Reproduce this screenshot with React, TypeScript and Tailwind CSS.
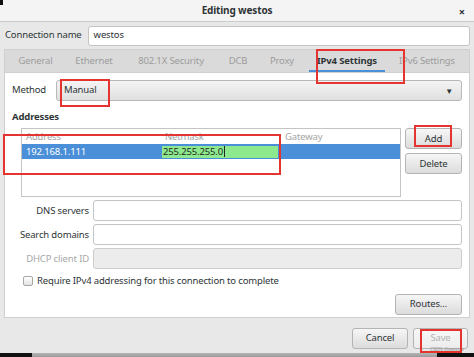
import React from "react"

const tabs = [
  { label: "General", width: "w-[57px]" },
  { label: "Ethernet", width: "w-[60px]" },
  { label: "802.1X Security", width: "w-[94px]" },
  { label: "DCB", width: "w-[40px]" },
  { label: "Proxy", width: "w-[48px]" },
  { label: "IPv4 Settings", width: "w-[82px]", active: true },
  { label: "IPv6 Settings", width: "w-[78px]" },
]

function Button({ children, className = "", disabled = false }: { children: React.ReactNode; className?: string; disabled?: boolean }) {
  return (
    <div
      className={`flex items-center justify-center rounded-[3px] border border-[#b4b4b4] bg-gradient-to-b ${
        disabled ? "from-[#f8f8f8] to-[#ececec] text-[#b2b2b2]" : "from-[#f6f6f6] to-[#dcdcdc] text-[#2e3436]"
      } ${className}`}
    >
      {children}
    </div>
  )
}

function Entry({ disabled = false }: { disabled?: boolean }) {
  return (
    <div
      className={`h-[21px] flex-1 rounded-[3px] border ${
        disabled ? "border-[#cdcdcd] bg-[#ececec]" : "border-[#c4c4c4] bg-white"
      }`}
    />
  )
}

export default function App() {
  return (
    <div
      className="relative flex h-[357px] w-[474px] flex-col overflow-hidden bg-[#e8e8e8] text-[9.5px] tracking-[-0.15px] text-[#2e3436]"
      style={{ fontFamily: '"Noto Sans", "Open Sans", sans-serif' }}
    >
      {/* Title bar */}
      <div className="relative flex h-[22px] shrink-0 items-center justify-center border-b border-[#cbcbcb] bg-[#f4f4f4]">
        <span className="text-[10px] font-bold text-[#2e3436]">Editing westos</span>
        <span className="absolute right-[9px] top-[4px] text-[11px] font-bold text-[#2e3436]">×</span>
      </div>

      {/* Connection name */}
      <div className="flex h-[27px] shrink-0 items-center gap-[6px] pl-[5px] pr-[4px]">
        <span className="text-[#2e3436]">Connection name</span>
        <div className="flex h-[20px] flex-1 items-center rounded-[3px] border border-[#c4c4c4] bg-white pl-[5px]">
          westos
        </div>
      </div>

      {/* Notebook */}
      <div className="mx-[4px] flex flex-col">
        <div className="flex h-[23px] items-stretch border border-b-0 border-[#cfcfcf] bg-[#dadada] px-[2px]">
          {tabs.map((tab) => (
            <div key={tab.label} className={`flex shrink-0 justify-center ${tab.width}`}>
              <div
                className={`flex flex-1 items-center justify-center ${
                  tab.active ? "mx-[3px] border-b-2 border-[#4a90d9] pt-[2px] font-bold text-[#2e3436]" : "text-[#9c9c9c]"
                }`}
              >
                {tab.label}
              </div>
            </div>
          ))}
        </div>

        <div className="flex h-[246px] flex-col border border-[#cfcfcf] bg-white pl-[7px] pr-[7px] pt-[7px]">
          {/* Method */}
          <div className="flex items-center gap-[10px]">
            <span>Method</span>
            <div className="flex h-[21px] flex-1 items-center justify-between rounded-[3px] border border-[#b8b8b8] bg-gradient-to-b from-[#f4f4f4] to-[#e0e0e0] pl-[7px] pr-[8px]">
              <span>Manual</span>
              <span className="text-[8px]">▼</span>
            </div>
          </div>

          <div className="mt-[9px] font-bold">Addresses</div>

          {/* Addresses table */}
          <div className="mt-[4px] flex gap-[4px] pl-[9px]">
            <div className="flex h-[69px] w-[380px] flex-col border border-[#c4c4c4] bg-white">
              <div className="flex h-[15px] items-center text-[#a4a4a4]">
                <span className="w-[140px] pl-[4px]">Address</span>
                <span className="w-[120px] pl-[3px]">Netmask</span>
                <span className="pl-[3px]">Gateway</span>
              </div>
              <div className="flex h-[15px] items-center bg-[#4a8fd8] text-white">
                <span className="w-[140px] pl-[4px]">192.168.1.111</span>
                <div className="flex h-[12px] w-[116px] items-center bg-[#8ee98e] pl-[1px] text-[#1e2a1e]">
                  255.255.255.0
                  <span className="ml-[1px] h-[11px] w-px bg-[#1e2a1e]" />
                </div>
              </div>
            </div>
            <div className="flex flex-col gap-[4px]">
              <Button className="h-[21px] w-[57px]">Add</Button>
              <Button className="h-[21px] w-[57px]">Delete</Button>
            </div>
          </div>

          {/* Entries */}
          <div className="mt-[3px] flex flex-col gap-[3px]">
            {[
              { label: "DNS servers" },
              { label: "Search domains" },
              { label: "DHCP client ID", disabled: true },
            ].map((row) => (
              <div key={row.label} className="flex items-center gap-[4px]">
                <span className={`w-[77px] text-right ${row.disabled ? "text-[#a8a8a8]" : ""}`}>{row.label}</span>
                <Entry disabled={row.disabled} />
              </div>
            ))}
          </div>

          {/* Checkbox */}
          <div className="mt-[5px] flex items-center gap-[4px] pl-[11px]">
            <div className="h-[10px] w-[10px] rounded-[2px] border border-[#a8a8a8] bg-gradient-to-b from-white to-[#e4e4e4]" />
            <span>Require IPv4 addressing for this connection to complete</span>
          </div>

          <div className="mt-[5px] flex justify-end">
            <Button className="h-[21px] w-[67px]">Routes…</Button>
          </div>
        </div>
      </div>

      {/* Bottom bar */}
      <div className="flex flex-1 items-start justify-end gap-[5px] pr-[6px] pt-[10px]">
        <Button className="h-[21px] w-[56px]">Cancel</Button>
        <Button className="h-[21px] w-[55px]" disabled>
          Save
        </Button>
      </div>

      {/* Screen edge */}
      <div className="flex h-[4px] shrink-0">
        <div className="w-[32px] bg-[#111]" />
        <div className="flex-1 bg-gradient-to-b from-[#b5b5b5] to-[#9a9a9a]" />
        <div className="w-[37px] bg-[#111]" />
      </div>

      {/* Overlays */}
      <div className="absolute left-0 top-0 h-[5px] w-[3px] bg-[#111]" />
      <span className="absolute left-[430px] top-[346px] text-[5px] text-[#9a9a9a]">CSDN @westos</span>
      <div className="absolute left-[316px] top-[49px] h-[35px] w-[89px] border-2 border-[#e3342f]" />
      <div className="absolute left-[60px] top-[79px] h-[28px] w-[50px] border-2 border-[#e3342f]" />
      <div className="absolute left-[3px] top-[134px] h-[41px] w-[278px] border-2 border-[#e3342f]" />
      <div className="absolute left-[414px] top-[125px] h-[22px] w-[38px] border-2 border-[#e3342f]" />
      <div className="absolute left-[420px] top-[329px] h-[24px] w-[42px] border-2 border-[#e3342f]" />
    </div>
  )
}
